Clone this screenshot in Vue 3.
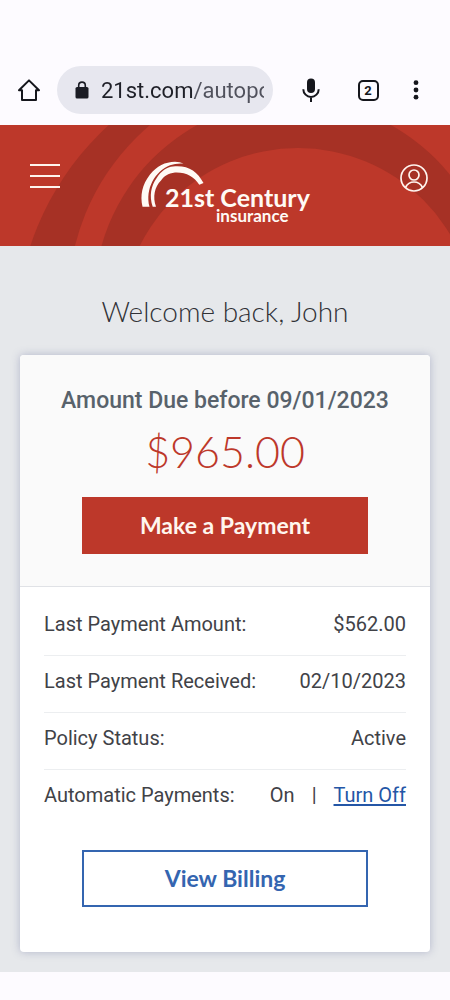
<script setup>
import { ref } from 'vue'

const address = ref('21st.com/autopolicy')
const rows = [
  { label: 'Last Payment Amount:', value: '$562.00' },
  { label: 'Last Payment Received:', value: '02/10/2023' },
  { label: 'Policy Status:', value: 'Active' },
]
</script>

<template>
  <div class="screen">
    <div class="toolbar">
      <button class="tool" type="button" aria-label="Home">
        <svg width="26" height="26" viewBox="0 0 26 26" fill="none" stroke="#15161c" stroke-width="2" stroke-linejoin="round" stroke-linecap="round">
          <path d="M3 13.2 13 3.4l10 9.8M3 13.2h3V23h14v-9.8h3" />
        </svg>
      </button>
      <label class="omnibox">
        <svg width="14" height="18" viewBox="0 0 14 18" aria-hidden="true">
          <rect x="0.5" y="6" width="13" height="11.5" rx="1.6" fill="#1b1c24" />
          <path d="M3.7 7V4.4a3.3 3.3 0 0 1 6.6 0V7" fill="none" stroke="#1b1c24" stroke-width="1.6" />
        </svg>
        <input v-model="address" class="url" type="text" aria-label="Address" />
      </label>
      <div class="tools">
        <button class="tool" type="button" aria-label="Voice search">
          <svg width="26" height="26" viewBox="0 0 26 26" fill="none" stroke="#15161c" stroke-width="2">
            <rect x="9" y="1.5" width="8" height="14.5" rx="4" fill="#15161c" stroke="none" />
            <path d="M5.3 12.2a7.7 7.7 0 0 0 15.4 0M13 20v5" />
          </svg>
        </button>
        <div class="tail">
          <button class="tool" type="button" aria-label="Open tabs">
            <span class="tabs">2</span>
          </button>
          <button class="tool" type="button" aria-label="More options">
            <svg width="6" height="22" viewBox="0 0 6 22" fill="#15161c">
              <circle cx="3" cy="3.7" r="2.4" /><circle cx="3" cy="11" r="2.4" /><circle cx="3" cy="18.2" r="2.4" />
            </svg>
          </button>
        </div>
      </div>
    </div>

    <header class="banner">
      <svg class="arcs" viewBox="0 0 450 121" preserveAspectRatio="xMidYMid slice" aria-hidden="true">
        <circle cx="300" cy="210" r="284" fill="#a63125" />
        <circle cx="300" cy="177" r="232" fill="#bd382a" />
        <circle cx="294" cy="175" r="200" fill="#a63125" />
        <circle cx="298" cy="200" r="177" fill="#bd382a" />
      </svg>
      <button class="menu" type="button" aria-label="Menu">
        <svg width="30" height="26" viewBox="0 0 30 26" stroke="#fff4ee" stroke-width="2">
          <path d="M0 2h30M0 13h30M0 24h30" />
        </svg>
      </button>
      <a class="logo" href="#" aria-label="21st Century Insurance">
        <svg width="180" height="66" viewBox="0 0 180 66" fill="#fffaf5">
          <path d="M2.500 46.700C0 35 2 25 10 14.500C17 6 25 2 35 1.800Q40 1.800 43.500 3.500Q36 3 30 5.200C15 11 5 29 9.500 46.700Z" />
          <path d="M12.700 46.700C9 36 11 26 16.700 18C21 11 27 7 33 6.500C48 5 57 11 63.500 23L59.300 24.800C54 16.500 46 12 35 12.500C28 13.500 24 16 21 20.500C14.500 27 12.500 37 16 46.700Z" />
          <text class="name" x="25" y="47">21st Century</text>
          <text class="sub" x="76" y="62">insurance</text>
        </svg>
      </a>
      <button class="account" type="button" aria-label="Account">
        <svg width="28" height="28" viewBox="0 0 28 28" fill="none" stroke="#fff4ee" stroke-width="1.700">
          <circle cx="14" cy="14" r="13" />
          <circle cx="14" cy="11" r="5" />
          <path d="M5.500 23.500c2-4 5-5.500 8.500-5.500s6.500 1.500 8.500 5.500" />
        </svg>
      </button>
    </header>

    <main class="content">
      <h1>Welcome back, John</h1>
      <section class="card">
        <div class="due">
          <h2>Amount Due before 09/01/2023</h2>
          <p class="amount">$965.00</p>
          <button class="btn pay" type="button">Make a Payment</button>
        </div>
        <div class="details">
          <dl>
            <div v-for="row in rows" :key="row.label" class="row">
              <dt>{{ row.label }}</dt>
              <dd>{{ row.value }}</dd>
            </div>
            <div class="row">
              <dt>Automatic Payments:</dt>
              <dd class="auto"><span>On</span><span>|</span><a href="#">Turn Off</a></dd>
            </div>
          </dl>
          <button class="btn billing" type="button">View Billing</button>
        </div>
      </section>
    </main>
  </div>
</template>

<style>
body {
  margin: 0;
  background: #fdfbff;
}
</style>

<style scoped>
.screen {
  padding: 56px 0 28px;
  background: #fdfbff;
  font-family: Roboto, "Liberation Sans", sans-serif;
  color: #414247;
}
button {
  padding: 0;
  border: 0;
  background: none;
  font: inherit;
  cursor: pointer;
}
svg {
  display: block;
}
.toolbar {
  display: flex;
  align-items: center;
  padding: 10px 21px 11px 16px;
}
.tool {
  display: grid;
  place-items: center;
  width: 26px;
  height: 32px;
}
.omnibox {
  display: flex;
  align-items: center;
  gap: 12px;
  flex: 1;
  min-width: 0;
  height: 48px;
  box-sizing: border-box;
  margin-left: 15px;
  padding: 0 9px 0 18px;
  border-radius: 24px;
  background: #e7e7ef;
}
.url {
  flex: 1;
  min-width: 0;
  padding: 2px 0 0;
  border: 0;
  outline: 0;
  font: 22px/30px Roboto, "Liberation Sans", sans-serif;
  color: transparent;
  background: linear-gradient(90deg, #1e1f27 92px, #50515c 92px);
  background-clip: text;
}
.tools,
.tail {
  display: flex;
}
.tools {
  gap: 31px;
  margin-left: 25px;
}
.tail {
  gap: 22px;
}
.tabs {
  width: 21px;
  height: 21px;
  box-sizing: border-box;
  border: 2px solid #15161c;
  border-radius: 5px;
  font-size: 13px;
  line-height: 17px;
  font-weight: 700;
  color: #15161c;
}
.banner {
  position: relative;
  display: flex;
  align-items: flex-start;
  justify-content: space-between;
  height: 121px;
  padding: 0 22px 0 30px;
  box-sizing: border-box;
  background: #bd382a;
  overflow: hidden;
}
.arcs {
  position: absolute;
  inset: 0;
  width: 100%;
  height: 100%;
}
.menu,
.logo,
.account {
  position: relative;
}
.menu {
  margin-top: 38px;
}
.logo {
  margin-top: 35px;
}
.account {
  margin-top: 39px;
}
.name {
  font: 700 25px Lato, sans-serif;
}
.sub {
  font: 700 17px Lato, sans-serif;
}
.content {
  padding: 45px 20px 20px;
  background: #e6e8eb;
}
h1 {
  margin: 0 0 24px;
  font: 300 28px/40px Lato, sans-serif;
  text-align: center;
  color: #303136;
}
.card {
  border-radius: 4px;
  background: #fff;
  box-shadow: 0 0 8px rgba(80, 90, 140, 0.35);
  overflow: hidden;
}
.due {
  padding: 31px 24px 32px;
  border-bottom: 1px solid #e0e2e6;
  background: #fafafa;
  text-align: center;
}
h2 {
  margin: 0;
  font-size: 23px;
  line-height: 30px;
  font-weight: 500;
  color: #58626b;
}
.amount {
  margin: 8px 0 17px;
  font: 300 43px/56px Lato, sans-serif;
  color: #bd382a;
}
.btn {
  display: block;
  width: 79%;
  height: 57px;
  margin: 0 auto;
  padding-bottom: 2px;
  font: 700 23px/28px Lato, sans-serif;
}
.pay {
  background: #bd382a;
  color: #fff6ee;
}
.details {
  padding: 12px 24px 45px;
}
dl {
  margin: 0 0 24px;
}
.row {
  display: flex;
  justify-content: space-between;
  padding: 12px 0 18px;
  font-size: 20px;
  line-height: 26px;
  border-bottom: 1px solid #eceef0;
}
.row:last-child {
  border-bottom: 0;
}
dd {
  margin: 0;
}
.auto {
  display: flex;
  gap: 17px;
}
.auto a {
  color: #2456a6;
  text-underline-offset: 2px;
}
.billing {
  border: 2px solid #3465b0;
  color: #3465b0;
}
</style>
